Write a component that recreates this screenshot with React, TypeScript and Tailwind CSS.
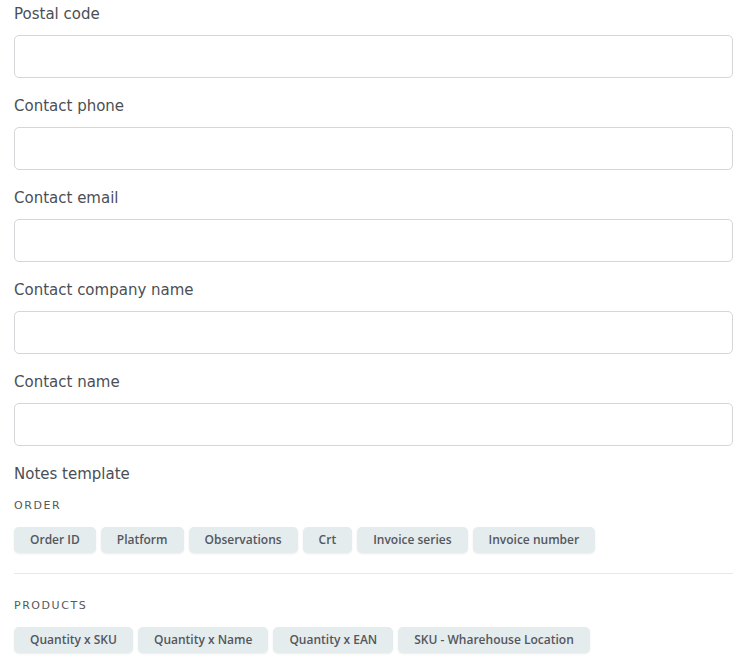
import React from 'react';

const fields = ['Postal code', 'Contact phone', 'Contact email', 'Contact company name', 'Contact name'];

const orderTags = ['Order ID', 'Platform', 'Observations', 'Crt', 'Invoice series', 'Invoice number'];
const productTags = ['Quantity x SKU', 'Quantity x Name', 'Quantity x EAN', 'SKU - Wharehouse Location'];

const Tag: React.FC<{ label: string }> = ({ label }) => (
  <button
    type="button"
    className="h-[26px] px-[16px] rounded-[5px] bg-[#e4ecee] font-['Open_Sans',sans-serif] text-[12px] font-semibold text-[#54575c] shadow-[0_1px_2px_rgba(0,0,0,0.08)] leading-none"
  >
    {label}
  </button>
);

const Section: React.FC<{ title: string; tags: string[] }> = ({ title, tags }) => (
  <div>
    <div className="text-[11px] tracking-[0.14em] text-[#55595e] uppercase leading-[11px]">{title}</div>
    <div className="mt-[16px] flex flex-wrap gap-[5px]">
      {tags.map((t) => (
        <Tag key={t} label={t} />
      ))}
    </div>
  </div>
);

export default function App() {
  return (
    <div className="bg-white min-h-screen pl-[14px] pr-[17px] pt-[5px] font-['DejaVu_Sans',sans-serif] text-[#4b4f55]">
      {fields.map((f) => (
        <div key={f} className="mb-[19px]">
          <label className="block text-[15px] leading-[18px] mb-[12px]">{f}</label>
          <input className="block w-full h-[43px] rounded-[5px] border border-[#d4d6da] bg-white outline-none" />
        </div>
      ))}
      <div className="text-[15px] leading-[18px]">Notes template</div>
      <div className="mt-[17px]">
        <Section title="Order" tags={orderTags} />
      </div>
      <div className="mt-[20px] h-px bg-[#e6e8ea]" />
      <div className="mt-[26px]">
        <Section title="Products" tags={productTags} />
      </div>
    </div>
  );
}
